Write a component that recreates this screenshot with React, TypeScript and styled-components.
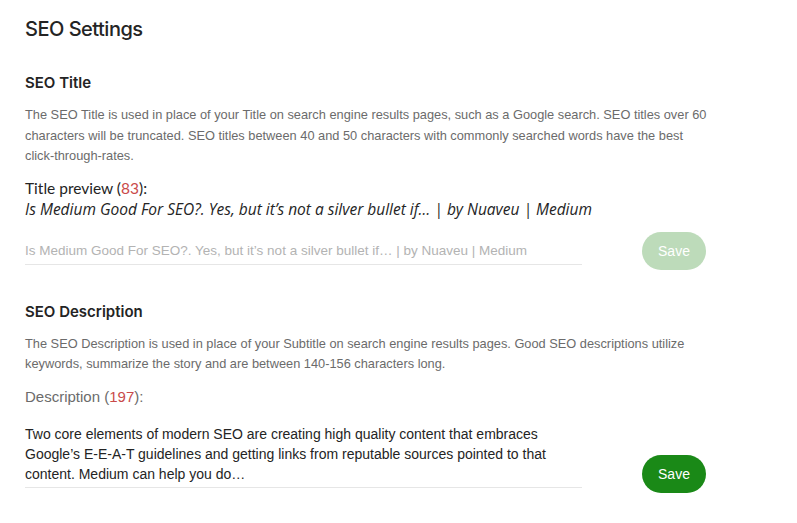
import React, { useState } from "react";
import styled, { createGlobalStyle } from "styled-components";

const GlobalStyle = createGlobalStyle`
  body {
    margin: 0;
    background: #fff;
    font-family: "Liberation Sans", Arial, sans-serif;
    color: #242424;
  }
`;

const Page = styled.div`
  padding: 16px 25px 20px;
  width: 690px;
`;

const PageTitle = styled.h1`
  margin: 0;
  font-family: Inter, "Liberation Sans", sans-serif;
  font-size: 20px;
  line-height: 26px;
  font-weight: 500;
  letter-spacing: -0.5px;
`;

const Section = styled.section<{ $top: number }>`
  margin-top: ${(p) => p.$top}px;
`;

const SectionTitle = styled.h2`
  margin: 0;
  font-family: Inter, "Liberation Sans", sans-serif;
  font-size: 15px;
  line-height: 20px;
  font-weight: 600;
`;

const Help = styled.p`
  margin: 12px 0 0;
  font-size: 12.8px;
  line-height: 20.5px;
  color: #6b6b6b;
`;

const PreviewLabel = styled.div`
  margin-top: 11px;
  font-family: Lato, "Open Sans", sans-serif;
  font-size: 15.5px;
  line-height: 21px;
  color: #242424;
`;

const Count = styled.span`
  color: #c94a4a;
`;

const PreviewText = styled.div`
  font-family: "Open Sans", "Noto Sans", sans-serif;
  font-style: italic;
  font-size: 15.5px;
  line-height: 21px;
  color: #242424;
`;

const DescLabel = styled.div`
  margin-top: 11px;
  font-size: 15px;
  line-height: 22px;
  color: #6b6b6b;
`;

const FieldRow = styled.div<{ $top: number }>`
  display: flex;
  align-items: flex-end;
  gap: 60px;
  margin-top: ${(p) => p.$top}px;
`;

const Field = styled.div`
  width: 557px;
  margin-bottom: 5px;
  border-bottom: 1px solid #e6e6e6;
  padding-bottom: 3px;
`;

const TitleInput = styled.input`
  display: block;
  width: 100%;
  border: 0;
  outline: none;
  padding: 0;
  font-family: inherit;
  font-size: 13.5px;
  line-height: 20px;
  color: #242424;
  &::placeholder {
    color: #b3b3b3;
  }
`;

const DescText = styled.div`
  font-size: 14px;
  line-height: 20px;
  color: #242424;
`;

const SaveButton = styled.button<{ $disabled?: boolean }>`
  width: 64px;
  height: 38px;
  border: 0;
  border-radius: 19px;
  background: ${(p) => (p.$disabled ? "#bddbba" : "#1a8917")};
  color: #fff;
  font-family: inherit;
  font-size: 14px;
  cursor: ${(p) => (p.$disabled ? "default" : "pointer")};
`;

const titleText =
  "Is Medium Good For SEO?. Yes, but it’s not a silver bullet if… | by Nuaveu | Medium";

export default function App() {
  const [title, setTitle] = useState("");
  return (
    <>
      <GlobalStyle />
      <Page>
        <PageTitle>SEO Settings</PageTitle>

        <Section $top={31}>
          <SectionTitle>SEO Title</SectionTitle>
          <Help>
            The SEO Title is used in place of your Title on search engine results pages, such as a
            Google search. SEO titles over 60 characters will be truncated. SEO titles between 40
            and 50 characters with commonly searched words have the best click-through-rates.
          </Help>
          <PreviewLabel>
            Title preview (<Count>83</Count>):
          </PreviewLabel>
          <PreviewText>{titleText}</PreviewText>
          <FieldRow $top={12}>
            <Field>
              <TitleInput
                value={title}
                placeholder={titleText}
                onChange={(e) => setTitle(e.target.value)}
              />
            </Field>
            <SaveButton $disabled>Save</SaveButton>
          </FieldRow>
        </Section>

        <Section $top={32}>
          <SectionTitle>SEO Description</SectionTitle>
          <Help>
            The SEO Description is used in place of your Subtitle on search engine results pages.
            Good SEO descriptions utilize keywords, summarize the story and are between 140-156
            characters long.
          </Help>
          <DescLabel>
            Description (<Count>197</Count>):
          </DescLabel>
          <FieldRow $top={16}>
            <Field>
              <DescText>
                Two core elements of modern SEO are creating high quality content that embraces
                Google’s E-E-A-T guidelines and getting links from reputable sources pointed to that
                content. Medium can help you do…
              </DescText>
            </Field>
            <SaveButton>Save</SaveButton>
          </FieldRow>
        </Section>
      </Page>
    </>
  );
}
